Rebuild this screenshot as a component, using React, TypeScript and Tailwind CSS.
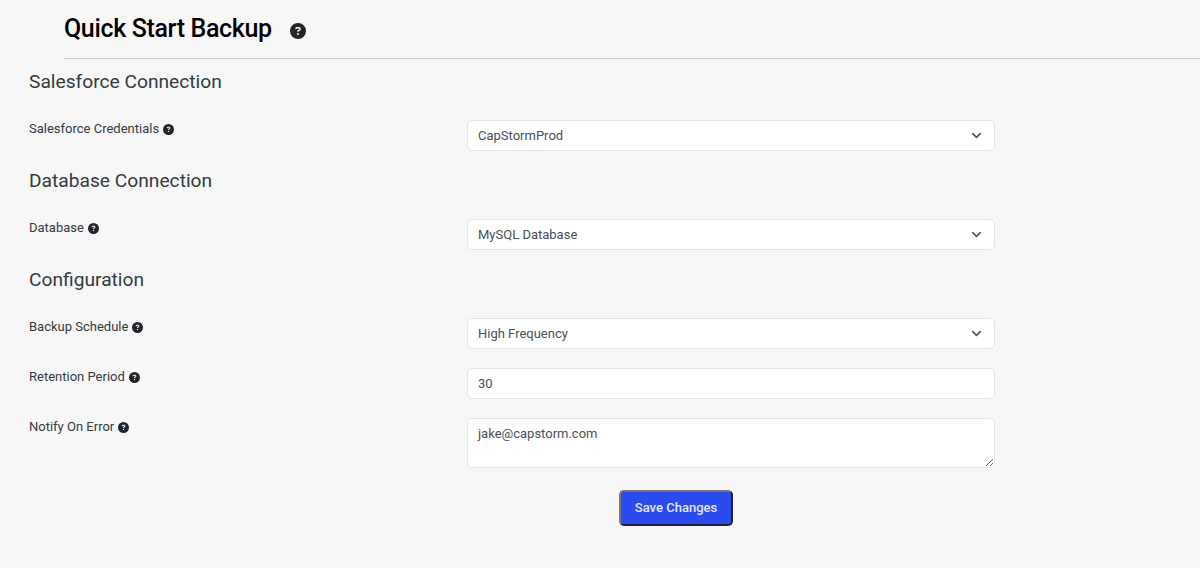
import { ChevronDown } from "lucide-react";
import { FaCircleQuestion } from "react-icons/fa6";

function FieldRow({ label, children }: { label: string; children: React.ReactNode }) {
  return (
    <div className="flex items-start">
      <label className="w-[438px] flex items-center gap-[4px] text-[13px] leading-[18px] text-[#343a40]">
        {label}
        <FaCircleQuestion className="w-[11px] h-[11px] text-[#212529]" />
      </label>
      {children}
    </div>
  );
}

function SelectBox({ value }: { value: string }) {
  return (
    <div className="w-[528px] h-[31px] pl-[10px] pr-[10px] flex items-center justify-between bg-white border border-[#e6e6e6] rounded-[5px] text-[13px] text-[#495057]">
      <span>{value}</span>
      <ChevronDown className="w-[15px] h-[15px] text-[#495057]" strokeWidth={2.4} />
    </div>
  );
}

function SectionTitle({ children, className }: { children: React.ReactNode; className: string }) {
  return <h2 className={`text-[19.2px] leading-[30px] text-[#343a40] ${className}`}>{children}</h2>;
}

export default function App() {
  return (
    <div className="min-h-[568px] bg-[#f7f7f7] font-['Roboto',sans-serif]">
      <header className="ml-16 h-[59px] border-b border-[#c8c8c8] flex items-center gap-[18px] pb-[1px]">
        <h1 className="text-[25px] font-medium text-black leading-[30px] tracking-[-0.35px]">Quick Start Backup</h1>
        <FaCircleQuestion className="w-[16px] h-[16px] mt-[5px] text-[#212529]" />
      </header>
      <div className="pl-[29px]">
        <SectionTitle className="pt-2 mb-[23px]">Salesforce Connection</SectionTitle>
        <FieldRow label="Salesforce Credentials">
          <SelectBox value="CapStormProd" />
        </FieldRow>
        <SectionTitle className="pt-[15px] mb-[23px]">Database Connection</SectionTitle>
        <FieldRow label="Database">
          <SelectBox value="MySQL Database" />
        </FieldRow>
        <SectionTitle className="pt-[15px] mb-[23px]">Configuration</SectionTitle>
        <div className="flex flex-col gap-[19px]">
          <FieldRow label="Backup Schedule">
            <SelectBox value="High Frequency" />
          </FieldRow>
          <FieldRow label="Retention Period">
            <input
              readOnly
              value="30"
              className="w-[528px] h-[31px] px-[10px] bg-white border border-[#e6e6e6] rounded-[5px] text-[13px] text-[#495057] outline-none"
            />
          </FieldRow>
          <FieldRow label="Notify On Error">
            <textarea
              readOnly
              value="jake@capstorm.com"
              className="block w-[528px] h-[50px] px-[10px] py-[4px] bg-white border border-[#e6e6e6] rounded-[5px] text-[13px] leading-[21px] text-[#495057] outline-none"
            />
          </FieldRow>
        </div>
        <div className="mt-[22px] ml-[590px]">
          <button className="w-[114px] h-[36px] bg-[#2a4bef] border-2 border-t-[#767676] border-l-[#767676] border-r-[#1e2430] border-b-[#1e2430] rounded-[5px] text-[13px] font-medium text-[#e4e8ff]">
            Save Changes
          </button>
        </div>
      </div>
    </div>
  );
}
